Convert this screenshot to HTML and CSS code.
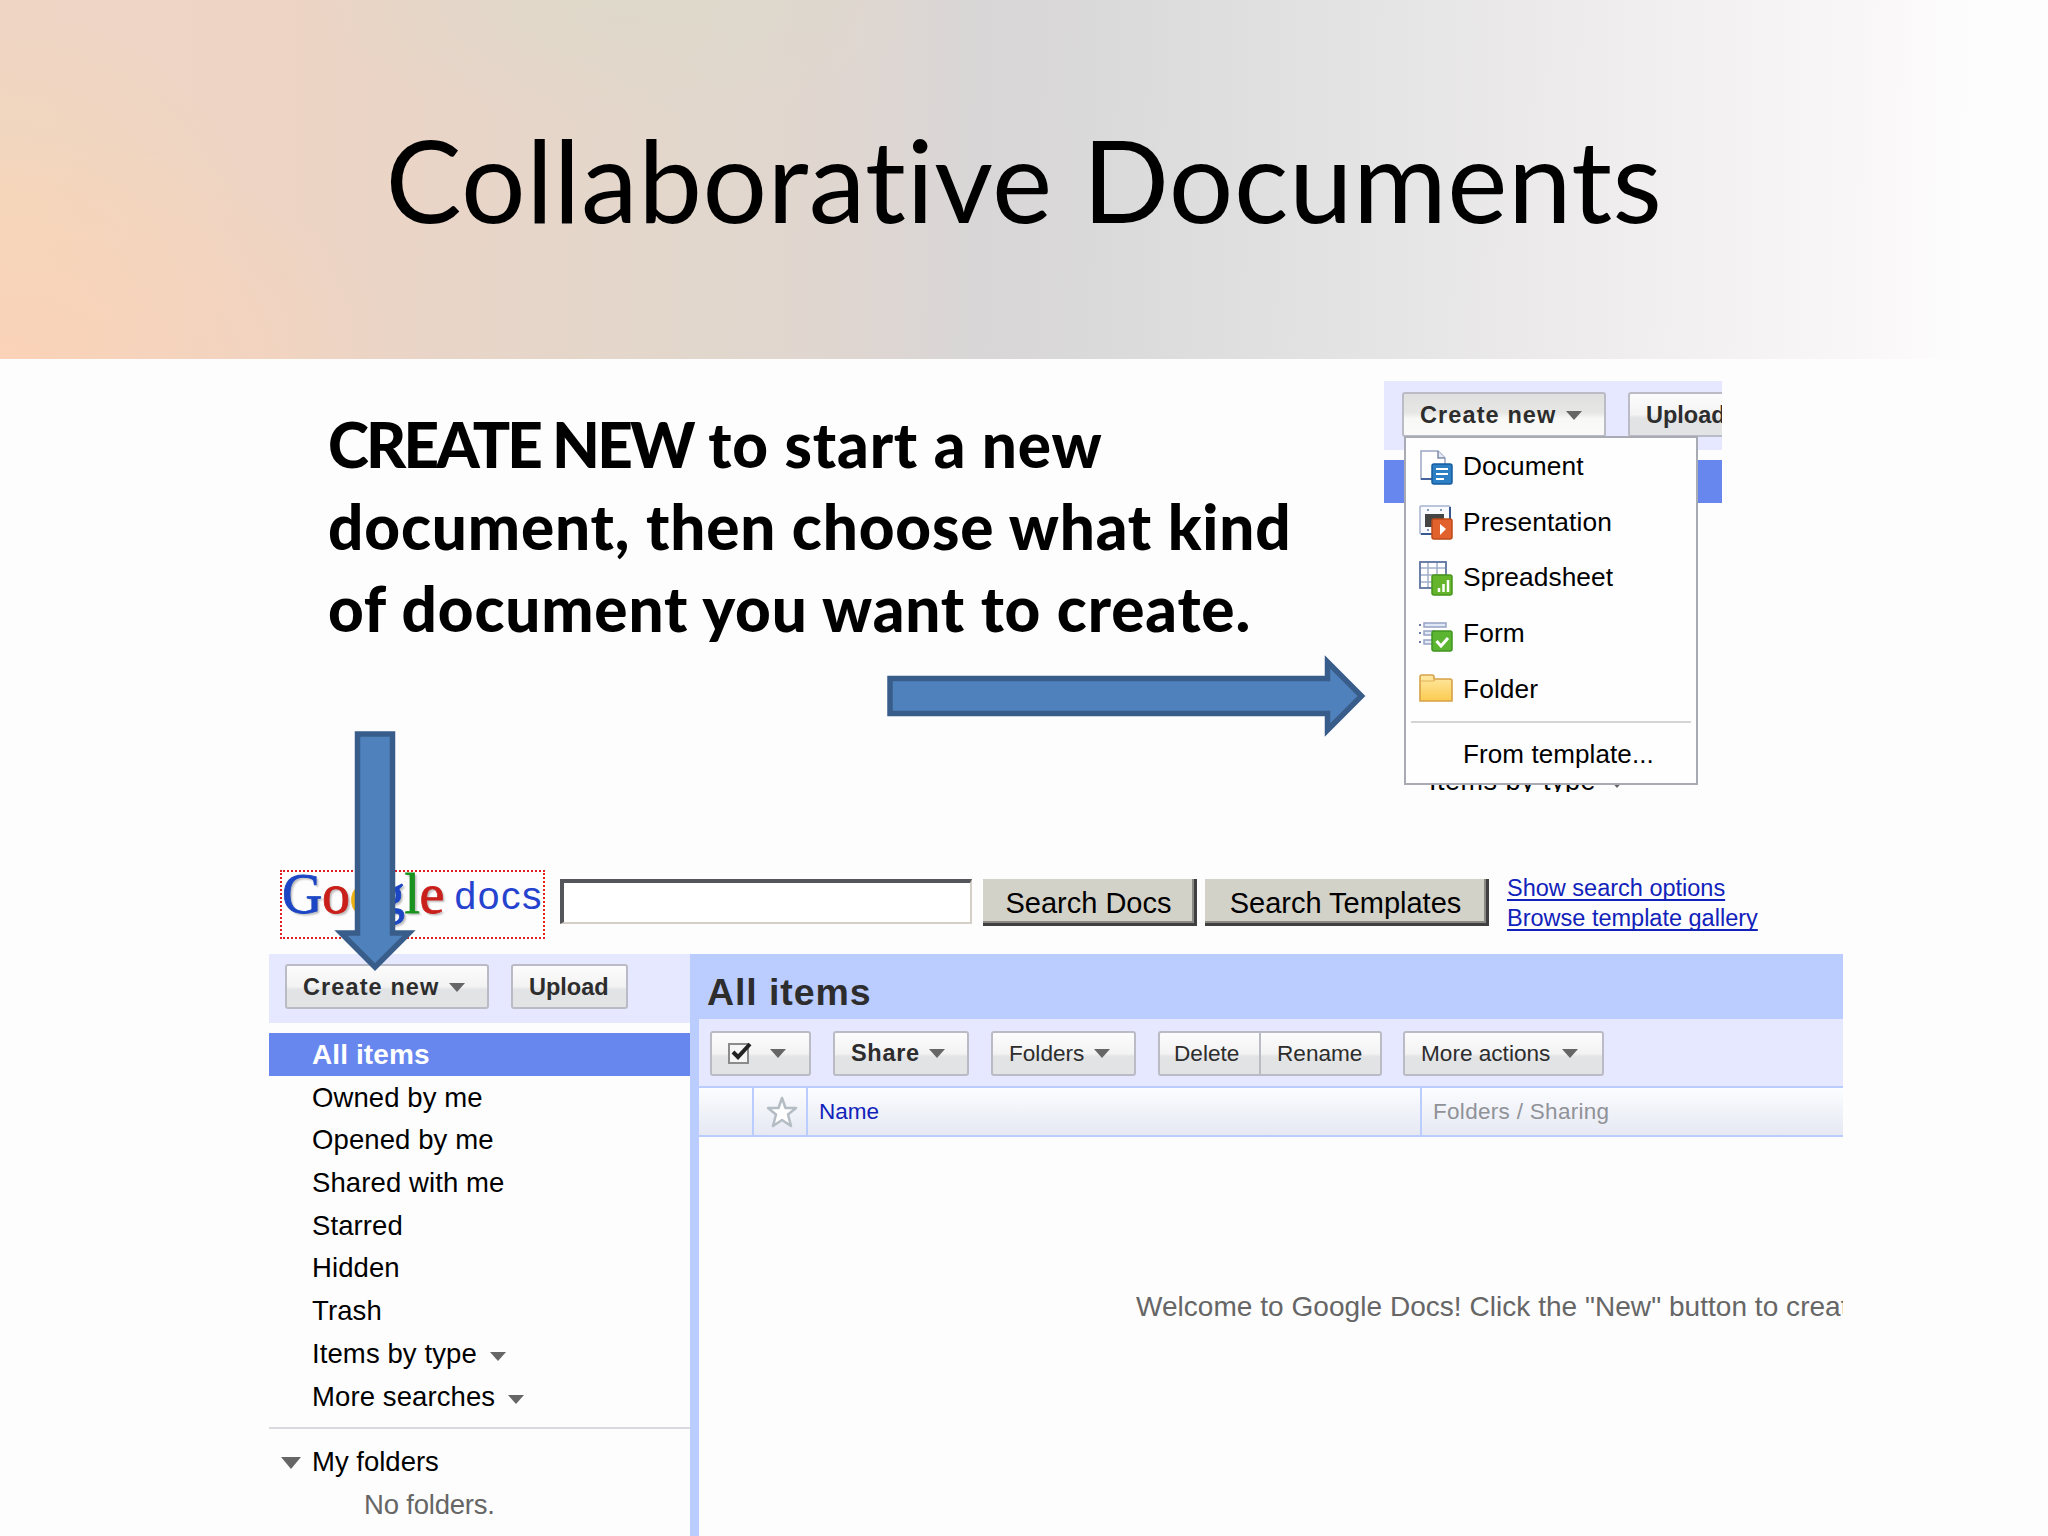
FILE: index.html
```html
<!DOCTYPE html>
<html lang="en">
<head>
    <meta charset="UTF-8">
    <title>Collaborative Documents</title>
    <link rel="stylesheet" href="styles.css">
</head>
<body>
    <div class="slide">
        <header class="slide-header">
            <h1>Collaborative Documents</h1>
        </header>

        <section class="intro">
            <p class="lead">
                <span class="line"><span class="caps">CREATE NEW</span> to start a new</span>
                <span class="line">document, then choose what kind</span>
                <span class="line">of document you want to create.</span>
            </p>

            <div class="menu-shot">
                <div class="button-bar shot-bar">
                    <span class="btn bold create pressed">Create new <i class="caret"></i></span>
                    <span class="btn bold upload">Upload</span>
                </div>
                <div class="shot-selected"></div>
                <div class="shot-behind">Items by type <i class="caret"></i></div>
                <div class="menu">
                    <div class="menu-item">
                        <svg width="36" height="36" viewBox="0 0 36 36">
                            <path d="M3 2h17l7 7v21H3z" fill="#fff" stroke="#9aa6c4" stroke-width="1.5"/>
                            <path d="M3 30h12" stroke="#47639c" stroke-width="2"/>
                            <path d="M20 2v7h7" fill="#e4e9f4" stroke="#7d8cab" stroke-width="1.5"/>
                            <rect x="14" y="15" width="20" height="20" rx="2" fill="#2c7fc4" stroke="#145d9f" stroke-width="1.5"/>
                            <path d="M18 20h12M18 25h12M18 30h8" stroke="#fff" stroke-width="2"/>
                        </svg>
                        Document
                    </div>
                    <div class="menu-item">
                        <svg width="36" height="36" viewBox="0 0 36 36">
                            <rect x="2" y="2" width="30" height="28" rx="1" fill="#f8faff" stroke="#a5b3cf" stroke-width="1.5"/>
                            <path d="M32 3v27H3" fill="none" stroke="#39578f" stroke-width="2"/>
                            <rect x="7" y="10" width="19" height="13" fill="#444"/>
                            <path d="M9 6h2M22 6h2M9 26h2" stroke="#8998b5" stroke-width="2"/>
                            <rect x="14" y="15" width="20" height="20" rx="2" fill="#e2622d" stroke="#bd4a18" stroke-width="1.5"/>
                            <path d="M22 20l6 5-6 6z" fill="#fff"/>
                        </svg>
                        Presentation
                    </div>
                    <div class="menu-item">
                        <svg width="36" height="36" viewBox="0 0 36 36">
                            <rect x="2" y="2" width="26" height="26" fill="#fff"/>
                            <path d="M2 8h26M2 15h26M2 22h26M10 2v26M19 2v26" stroke="#a3b0cc" stroke-width="1.5"/>
                            <rect x="2" y="2" width="26" height="26" fill="none" stroke="#5c739f" stroke-width="1.8"/>
                            <rect x="14" y="15" width="20" height="20" rx="2" fill="#65b52c" stroke="#48951b" stroke-width="1.5"/>
                            <path d="M21 32v-4M25.500 32v-8M30 32V20" stroke="#fff" stroke-width="2.500"/>
                        </svg>
                        Spreadsheet
                    </div>
                    <div class="menu-item">
                        <svg width="36" height="36" viewBox="0 0 36 36">
                            <path d="M1 9h2M1 17h2M1 26h2" stroke="#6d7fa5" stroke-width="2"/>
                            <path d="M6 7h22v4H6zM6 15h10v4H6zM6 24h10v4H6z" fill="#e1e8f6" stroke="#95a3c4" stroke-width="1.500"/>
                            <rect x="14" y="15" width="20" height="20" rx="2" fill="#5bb531" stroke="#409420" stroke-width="1.5"/>
                            <path d="M18.500 25l4.500 5 7-8" fill="none" stroke="#fff" stroke-width="3"/>
                        </svg>
                        Form
                    </div>
                    <div class="menu-item">
                        <svg width="36" height="36" viewBox="0 0 36 36">
                            <defs>
                                <linearGradient id="folder" x1="0" y1="0" x2="0" y2="1">
                                    <stop offset="0" stop-color="#ffe9a4"/>
                                    <stop offset="1" stop-color="#fbcb50"/>
                                </linearGradient>
                            </defs>
                            <path d="M2 30V6q0-2 2-2h10q2 0 2 2v2h16q2 0 2 2v20z" fill="url(#folder)" stroke="#d6a047" stroke-width="1.600"/>
                            <path d="M3 10h12l2-1" fill="none" stroke="#e2b45b" stroke-width="1.200"/>
                        </svg>
                        Folder
                    </div>
                    <div class="menu-rule"></div>
                    <div class="menu-item template">From template...</div>
                </div>
            </div>
        </section>

        <section class="docs">
            <div class="search-row">
                <div class="logo"><span class="google"><b class="blue">G</b><b class="red">o</b><b class="yellow">o</b><b class="blue">g</b><b class="green">l</b><b class="red">e</b></span><span class="product">docs</span></div>
                <input class="search-box" type="text">
                <button class="search-btn docs-btn">Search Docs</button>
                <button class="search-btn templates-btn">Search Templates</button>
                <div class="links">
                    <a href="#">Show search options</a>
                    <a href="#">Browse template gallery</a>
                </div>
            </div>

            <div class="panes">
                <aside class="sidebar">
                    <div class="button-bar">
                        <span class="btn bold create">Create new <i class="caret"></i></span>
                        <span class="btn bold upload">Upload</span>
                    </div>
                    <ul class="nav">
                        <li class="selected">All items</li>
                        <li>Owned by me</li>
                        <li>Opened by me</li>
                        <li>Shared with me</li>
                        <li>Starred</li>
                        <li>Hidden</li>
                        <li>Trash</li>
                        <li>Items by type <i class="caret"></i></li>
                        <li>More searches <i class="caret"></i></li>
                    </ul>
                    <div class="folders">
                        <div class="folders-title"><i class="caret big"></i>My folders</div>
                        <div class="folders-empty">No folders.</div>
                    </div>
                </aside>

                <main class="list">
                    <h2>All items</h2>
                    <div class="toolbar">
                        <span class="btn check">
                            <svg width="26" height="26" viewBox="0 0 26 26">
                                <rect x="1" y="3" width="19" height="19" fill="#f5f5f5" stroke="#8b8b8b" stroke-width="2"/>
                                <path d="M5 11l5 5L22 3" fill="none" stroke="#222" stroke-width="4"/>
                            </svg>
                            <i class="caret"></i>
                        </span>
                        <span class="btn bold share">Share <i class="caret"></i></span>
                        <span class="btn folders-btn">Folders <i class="caret"></i></span>
                        <span class="btn delete">Delete</span><span class="btn rename">Rename</span>
                        <span class="btn more">More actions <i class="caret"></i></span>
                    </div>
                    <div class="columns">
                        <span class="col-check"></span>
                        <span class="col-star">
                            <svg width="34" height="34" viewBox="0 0 34 34">
                                <path d="M17 3l3.500 10H31l-8 6.500L26 31l-9-6-9 6 3-11.500L3 13h10.500z" fill="#fff" stroke="#b4bcc4" stroke-width="2.500" stroke-linejoin="round"/>
                            </svg>
                        </span>
                        <span class="col-name">Name</span>
                        <span class="col-sharing">Folders / Sharing</span>
                    </div>
                    <div class="welcome">Welcome to Google Docs! Click the "New" button to creat</div>
                </main>
            </div>
        </section>

        <!-- callout arrows, drawn over the slide -->
        <svg class="arrow arrow-right" width="480" height="82" viewBox="0 0 480 82">
            <path d="M3 23.500H440.500V7L474.500 41L440.500 75V58.500H3z"/>
        </svg>
        <svg class="arrow arrow-down" width="82" height="242" viewBox="0 0 82 242">
            <path d="M23.500 3V202H7L41 236L75 202H58.500V3z"/>
        </svg>
    </div>
</body>
</html>
```
FILE: styles.css
```css
* {
    box-sizing: border-box;
}
body {
    margin: 0;
    background: #fdfdfd;
    font-family: "Liberation Sans", Arial, sans-serif;
    color: #000;
}
.slide {
    position: relative;
    width: 2048px;
    height: 1536px;
    overflow: hidden;
    background: #fdfdfd;
}

/* Slide title */
.slide-header {
    height: 359px;
    display: flex;
    justify-content: center;
    background:
        radial-gradient(ellipse 400px 230px at 0 100%, rgba(252, 210, 182, 0.85), rgba(252, 210, 182, 0)),
        radial-gradient(ellipse 260px 200px at 0 60%, rgba(245, 216, 184, 0.7), rgba(245, 216, 184, 0)),
        radial-gradient(ellipse 320px 120px at 620px 0, rgba(220, 218, 202, 0.7), rgba(220, 218, 202, 0)),
        linear-gradient(91deg, #efd5c4 0%, #edd4c4 14%, #e8d5c8 23%, #e2d7cc 34%, #dfd6d1 42%, #d8d6d7 48%, #dbdadb 54%, #e6e5e6 68%, #f0eeef 80%, #f8f6f7 90%, #fefdfd 96%);
}
h1 {
    margin: 0;
    padding-top: 109px;
    font: 400 114px/140px Lato, sans-serif;
    letter-spacing: 0.500px;
    white-space: nowrap;
}

/* Instruction text and the open menu */
.intro {
    height: 511px;
    display: flex;
    justify-content: space-between;
    padding: 22px 326px 0 328px;
}
.lead {
    margin: 0;
    padding-top: 22px;
    font: 900 62px/82px Lato, sans-serif;
    letter-spacing: 0.850px;
    white-space: nowrap;
}
.line {
    display: block;
}
.caps {
    letter-spacing: -2.800px;
}
.menu-shot {
    position: relative;
    width: 338px;
    height: 411px;
    overflow: hidden;
}
.button-bar {
    display: flex;
    gap: 22px;
    height: 69px;
    padding: 10px 16px 0;
    background: #e5e8ff;
}
.shot-bar {
    padding: 11px 0 0 18px;
    width: 480px;
}
.shot-selected {
    height: 43px;
    margin-top: 10px;
    background: #6787ef;
}
.shot-behind {
    margin: 264px 0 0 45px;
    font-size: 27px;
    line-height: 28px;
    letter-spacing: 0.500px;
}
.shot-behind .caret {
    margin-left: 5px;
    vertical-align: 2px;
}
.menu {
    position: absolute;
    left: 20px;
    top: 55px;
    width: 294px;
    height: 349px;
    padding: 1px 5px 0;
    background: #fefefe;
    border: 2px solid #a9abb4;
}
.menu-item {
    display: flex;
    align-items: center;
    gap: 9px;
    height: 55.600px;
    padding-left: 7px;
    font-size: 26.300px;
    letter-spacing: 0.100px;
}
.menu-rule {
    height: 2px;
    margin: 4px 0;
    background: #d5d5d5;
}
.template {
    padding-left: 52px;
    font-size: 26px;
}

/* Shared button */
.btn {
    display: inline-flex;
    align-items: center;
    flex: none;
    height: 45px;
    padding: 2px 16px 0;
    border: 2px solid #babbc4;
    border-radius: 3px;
    background: linear-gradient(#fcfcfc 0%, #f3f3f3 50%, #e2e3e5 58%, #e2e3e5 100%);
    color: #2d2d2d;
    font-size: 22.600px;
    white-space: nowrap;
}
.bold {
    font-weight: bold;
    font-size: 23.500px;
    letter-spacing: 1.100px;
}
.create {
    width: 204px;
}
.upload {
    width: 117px;
    letter-spacing: 0;
}
.pressed {
    background: linear-gradient(#e0e0e0 0%, #e6e6e4 45%, #f8f8f6 60%, #fafaf8 100%);
}
.caret {
    display: inline-block;
    margin-left: 10px;
    border: 8px solid transparent;
    border-top: 9px solid #666;
    border-bottom: 0;
}
.big {
    border-width: 12px 10px 0;
}

/* Search row */
.search-row {
    display: flex;
    height: 84px;
    padding-left: 280px;
}
.logo {
    display: flex;
    width: 265px;
    height: 69px;
    border: 2px dotted #e02020;
    line-height: 48px;
    white-space: nowrap;
}
.google {
    width: 173px;
    font: 56px/45px "Liberation Serif", serif;
    letter-spacing: -0.500px;
    text-shadow: 2px 2px 2px #bbb;
}
.google b {
    font-weight: 400;
    -webkit-text-stroke: 0.800px currentColor;
}
.blue { color: #1c46c4; }
.red { color: #c9201c; }
.yellow { color: #eeb211; }
.green { color: #1a921f; }
.product {
    color: #2643cf;
    font-size: 39px;
    letter-spacing: 1.500px;
}
.search-box {
    width: 412px;
    height: 45px;
    margin: 9px 0 0 15px;
    padding: 0;
    background: #fff;
    border: 2px solid #d4d0c8;
    border-top: 4px solid #55565c;
    border-left: 4px solid #55565c;
}
.search-btn {
    height: 47px;
    margin: 9px 0 0 11px;
    padding: 4px 0 0;
    background: #d3d2c9;
    border: 0 solid #404040;
    border-width: 0 3px 3px 0;
    box-shadow: inset -2px -2px 0 #8a8984;
    font: 29px "Liberation Sans", Arial, sans-serif;
}
.docs-btn {
    width: 214px;
}
.templates-btn {
    width: 284px;
    margin-left: 8px;
}
.links {
    display: flex;
    flex-direction: column;
    padding: 3px 0 0 18px;
    font-size: 23.500px;
    line-height: 30px;
    white-space: nowrap;
}
.links a {
    color: #1122bb;
    text-decoration-thickness: 2px;
    text-underline-offset: 3px;
    text-decoration-skip-ink: none;
}

/* Docs list */
.panes {
    display: flex;
    width: 1574px;
    height: 582px;
    margin-left: 269px;
}
.sidebar {
    width: 421px;
}
.nav {
    margin: 10px 0 0;
    padding: 0;
    list-style: none;
    font-size: 27.500px;
    line-height: 44px;
    letter-spacing: 0.100px;
}
.nav li {
    height: 42.700px;
    padding-left: 43px;
}
.nav .caret {
    margin-left: 5px;
    vertical-align: 2px;
}
.nav .selected {
    background: #6787ef;
    color: #fff;
    font-weight: bold;
    font-size: 28px;
}
.folders {
    margin-top: 10px;
    padding-top: 12px;
    border-top: 2px solid #d9d9de;
    font-size: 27.500px;
    line-height: 42.700px;
}
.folders-title {
    display: flex;
    align-items: center;
    gap: 11px;
}
.folders .caret {
    margin-left: 12px;
}
.folders-empty {
    padding-left: 95px;
    color: #666;
    letter-spacing: -0.200px;
}
.list {
    width: 1153px;
    border-left: 9px solid #bbccff;
    overflow: hidden;
}
h2 {
    height: 65px;
    margin: 0;
    padding-left: 8px;
    background: #bbccff;
    color: #2d2d2d;
    font-size: 37.500px;
    line-height: 76px;
    letter-spacing: 0.900px;
}
.toolbar {
    display: flex;
    height: 67px;
    padding: 12px 0 0 11px;
    background: #e5e8ff;
}
.toolbar .btn {
    padding-top: 0;
}
.check {
    width: 101px;
}
.check .caret {
    margin-left: 16px;
}
.share {
    width: 136px;
    margin-left: 22px;
    letter-spacing: 0.700px;
}
.share .caret {
    margin-left: 9px;
}
.folders-btn {
    width: 145px;
    margin-left: 22px;
}
.delete {
    width: 101px;
    margin-left: 22px;
    padding: 0 14px;
    border-right: 0;
    border-radius: 3px 0 0 3px;
}
.rename {
    width: 123px;
    border-radius: 0 3px 3px 0;
}
.more {
    width: 201px;
    margin-left: 21px;
}
.more .caret {
    margin-left: 12px;
}
.columns {
    display: flex;
    height: 51px;
    border: solid #bbccff;
    border-width: 2px 0;
    background: linear-gradient(#fbfdff, #e6e8f3);
    font-size: 22.500px;
    line-height: 48px;
}
.columns span {
    border-right: 2px solid #bbccff;
}
.col-check {
    width: 55px;
}
.columns .col-star {
    width: 54px;
    padding: 7px 9px 0 11px;
    line-height: 0;
}
.col-name {
    width: 614px;
    padding-left: 11px;
    color: #1122bb;
}
.columns .col-sharing {
    padding-left: 11px;
    border-right: 0;
    color: #909298;
    letter-spacing: 0.300px;
}
.welcome {
    margin: 150px 0 0 437px;
    width: 707px;
    overflow: hidden;
    color: #666;
    font-size: 28px;
    line-height: 40px;
    letter-spacing: 0.040px;
    white-space: nowrap;
}

/* Callout arrows */
.arrow {
    position: absolute;
    fill: #4f81bd;
    stroke: #385d8a;
    stroke-width: 5.500;
}
.arrow-right {
    left: 887px;
    top: 655px;
}
.arrow-down {
    left: 334px;
    top: 731px;
}
```
